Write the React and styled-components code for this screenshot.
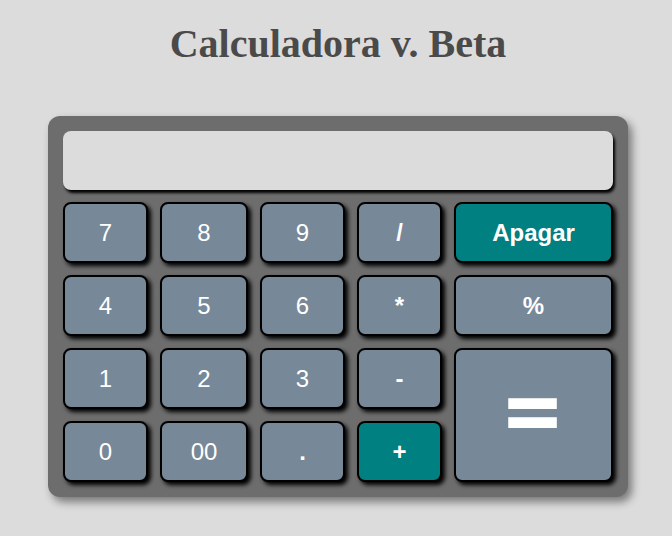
import React from "react";
import styled, { createGlobalStyle } from "styled-components";

const GlobalStyle = createGlobalStyle`
  html, body {
    margin: 0;
    padding: 0;
    background: #dcdcdc;
  }
  body {
    font-family: "Liberation Sans", Arial, sans-serif;
  }
`;

const Page = styled.div`
  display: flex;
  flex-direction: column;
  align-items: center;
  padding: 21px 0 0 4px;
  min-height: 536px;
  box-sizing: border-box;
`;

const Title = styled.h1`
  margin: 0 0 49px;
  font-family: "Liberation Serif", "Times New Roman", serif;
  font-weight: bold;
  font-size: 40px;
  line-height: 46px;
  color: #4a4a4a;
`;

const Body = styled.div`
  width: 580px;
  box-sizing: border-box;
  padding: 15px;
  background: #6d6d6d;
  border-radius: 12px;
  box-shadow: 4px 5px 8px rgba(0, 0, 0, 0.45);
  display: flex;
  flex-direction: column;
  gap: 12px;
`;

const Display = styled.div`
  height: 59px;
  background: #dcdcdc;
  border-radius: 8px;
  box-shadow: 2px 3px 3px #000;
`;

const Keys = styled.div`
  display: grid;
  grid-template-columns: 85px 88px 85px 85px 1fr;
  grid-auto-rows: 61px;
  gap: 12px;
`;

const Key = styled.button`
  grid-row: ${(p) => p.$rows || "auto"};
  margin: 0;
  padding: 0;
  border: 2px solid #000;
  border-radius: 8px;
  background: ${(p) => (p.$accent ? "#008080" : "#778899")};
  color: #fff;
  font-family: "Liberation Sans", Arial, sans-serif;
  font-size: 24px;
  font-weight: ${(p) => (p.$bold ? "bold" : "normal")};
  line-height: 1;
  box-shadow: 3px 3px 4px #000;
  display: flex;
  align-items: center;
  justify-content: center;
  cursor: pointer;
`;

const EqualsKey = styled(Key)`
  font-family: "Noto Sans", "Liberation Sans", sans-serif;
  font-size: 100px;
  padding: 0 2px 11px 0;
`;

const keys = [
  { label: "7" },
  { label: "8" },
  { label: "9" },
  { label: "/", bold: true },
  { label: "Apagar", bold: true, accent: true },
  { label: "4" },
  { label: "5" },
  { label: "6" },
  { label: "*", bold: true },
  { label: "%", bold: true },
  { label: "1" },
  { label: "2" },
  { label: "3" },
  { label: "-", bold: true },
  { label: "=", bold: true, rows: "span 2", equals: true },
  { label: "0" },
  { label: "00" },
  { label: ".", bold: true },
  { label: "+", bold: true, accent: true },
];

export default function App() {
  return (
    <>
      <GlobalStyle />
      <Page>
        <Title>Calculadora v. Beta</Title>
        <Body>
          <Display />
          <Keys>
            {keys.map((k) => {
              const Button = k.equals ? EqualsKey : Key;
              return (
                <Button
                  key={k.label}
                  $bold={k.bold}
                  $accent={k.accent}
                  $rows={k.rows}
                >
                  {k.label}
                </Button>
              );
            })}
          </Keys>
        </Body>
      </Page>
    </>
  );
}
